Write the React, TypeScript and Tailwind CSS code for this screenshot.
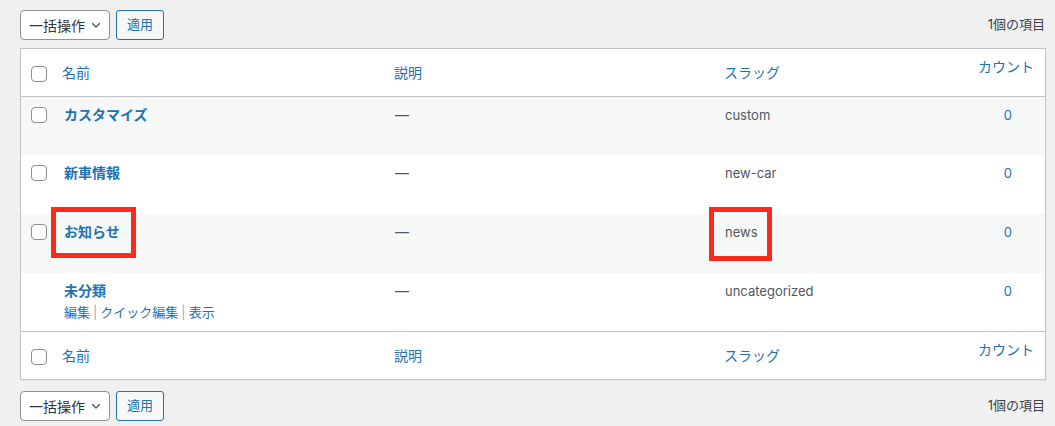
import React from "react";

const FONT = { fontFamily: '"Inter", "Noto Sans CJK JP", sans-serif' };

type Row = { name: string; slug: string; count: string; shaded: boolean; actions?: boolean; h: string };

const ROWS: Row[] = [
  { name: "カスタマイズ", slug: "custom", count: "0", shaded: true, h: "h-[58px]" },
  { name: "新車情報", slug: "new-car", count: "0", shaded: false, h: "h-[59px]" },
  { name: "お知らせ", slug: "news", count: "0", shaded: true, h: "h-[59px]" },
  { name: "未分類", slug: "uncategorized", count: "0", shaded: false, actions: true, h: "h-[58px]" },
];

const GRID = "grid grid-cols-[35px_329px_330px_256px_1fr]";

function Checkbox({ className = "" }: { className?: string }) {
  return (
    <span
      className={`block h-4 w-4 rounded-[4px] border border-[#8c8f94] bg-white ${className}`.trim()}
    />
  );
}

function Toolbar() {
  return (
    <div className="flex h-[30px] items-center justify-between">
      <div className="flex items-center gap-[6px]">
        <div className="flex h-[30px] w-[90px] items-center justify-between rounded-[4px] border border-[#8c8f94] bg-white pl-[8px] pr-[8px] text-[14px] text-[#2c3338]">
          <span>一括操作</span>
          <svg className="h-[10px] w-[10px]" viewBox="0 0 10 10" fill="none" stroke="#50575e" strokeWidth={1.3}>
            <path strokeLinecap="round" strokeLinejoin="round" d="M1.5 3.5 5 7l3.5-3.5" />
          </svg>
        </div>
        <button
          type="button"
          className="flex h-[30px] w-[48px] items-center justify-center rounded-[3px] border border-[#2271b1] bg-[#f6f7f7] text-[13px] text-[#2271b1]"
        >
          適用
        </button>
      </div>
      <span className="pr-[1px] text-[13px] text-[#3c434a]">1個の項目</span>
    </div>
  );
}

function HeadRow({ footer = false }: { footer?: boolean }) {
  return (
    <div
      className={`${GRID} h-[48px] bg-white text-[14px] text-[#2271b1] ${
        footer ? "border-t border-[#c3c4c7]" : "border-b border-[#c3c4c7]"
      }`}
    >
      <div className={`pl-[10px] ${footer ? "pt-[17px]" : "pt-[17px]"}`}>
        <Checkbox />
      </div>
      <div className="pl-[6px] pt-[14px] leading-5">名前</div>
      <div className="pl-[9px] pt-[14px] leading-5">説明</div>
      <div className="pl-[9px] pt-[14px] leading-5">スラッグ</div>
      <div className="pt-[8px] pr-[11px] text-right leading-5">カウント</div>
    </div>
  );
}

function TermRow({ row }: { row: Row }) {
  return (
    <div className={`${GRID} ${row.h} ${row.shaded ? "bg-[#f6f7f7]" : "bg-white"}`}>
      <div className="pl-[10px] pt-[10px]">
        {row.actions ? null : <Checkbox />}
      </div>
      <div className="pl-[8px] pt-[8px]">
        <div className="text-[14px] font-bold leading-5 text-[#2271b1]">{row.name}</div>
        {row.actions ? (
          <div className="flex items-center pt-[2px] text-[13px] leading-[18px] text-[#2271b1]">
            <span>編集</span>
            <span className="px-[3px] text-[#a7aaad]">|</span>
            <span>クイック編集</span>
            <span className="px-[3px] text-[#a7aaad]">|</span>
            <span>表示</span>
          </div>
        ) : null}
      </div>
      <div className="pl-[10px] pt-[8px] text-[14px] leading-5 text-[#50575e]">—</div>
      <div className="pl-[10px] pt-[8px] text-[13px] leading-5 text-[#50575e]">{row.slug}</div>
      <div className="pr-[33px] pt-[8px] text-right text-[13px] leading-5 text-[#2271b1]">{row.count}</div>
    </div>
  );
}

export default function App() {
  return (
    <div style={FONT} className="relative min-h-[426px] w-full bg-[#f0f0f1] pb-[5px] pl-[20px] pr-[9px] pt-[10px]">
      <Toolbar />
      <div className="mt-[8px] border border-[#c3c4c7] bg-white shadow-[0_1px_1px_rgba(0,0,0,0.04)]">
        <HeadRow />
        {ROWS.map((row) => (
          <TermRow key={row.slug} row={row} />
        ))}
        <HeadRow footer />
      </div>
      <div className="mt-[11px]">
        <Toolbar />
      </div>

      {/* annotation boxes */}
      <div className="pointer-events-none absolute left-[51px] top-[207px] h-[51px] w-[85px] border-[5px] border-[#fb2a1c]" />
      <div className="pointer-events-none absolute left-[709px] top-[207px] h-[54px] w-[63px] border-[5px] border-[#fb2a1c]" />
    </div>
  );
}
